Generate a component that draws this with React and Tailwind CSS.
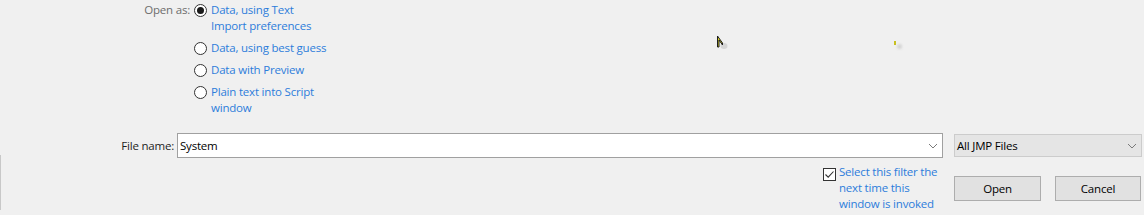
import React from "react";

const font = { fontFamily: '"Segoe UI", "Open Sans", "Noto Sans", sans-serif' };

const Radio = ({ checked }) => (
  <span className="mt-[2px] flex h-[13px] w-[13px] shrink-0 items-center justify-center rounded-full border border-[#333333] bg-white">
    {checked && <span className="h-[7px] w-[7px] rounded-full bg-[#1a1a1a]" />}
  </span>
);

const Chevron = () => (
  <svg width="10" height="6" viewBox="0 0 10 6" className="shrink-0">
    <path d="M1 1 L5 5 L9 1" fill="none" stroke="#7a7a7a" strokeWidth="1" />
  </svg>
);

const options = [
  { lines: ["Data, using Text", "Import preferences"], checked: true },
  { lines: ["Data, using best guess"] },
  { lines: ["Data with Preview"] },
  { lines: ["Plain text into Script", "window"] },
];

export default function App() {
  return (
    <div
      className="relative h-[215px] w-[1144px] overflow-hidden bg-[#f0f0f0] text-[11.5px] leading-4 tracking-[-0.2px]"
      style={font}
    >
      {/* Open as options */}
      <div className="flex pt-[2px]">
        <div className="w-[191px] pr-[1px] text-right text-[#6d6d6d]">Open as:</div>
        <div className="ml-[3px] flex flex-col gap-[6px]">
          {options.map((o, i) => (
            <div key={i} className="flex items-start gap-[4px]">
              <Radio checked={o.checked} />
              <div className="whitespace-nowrap text-[#2d7ddb]">
                {o.lines.map((l, j) => (
                  <div key={j}>{l}</div>
                ))}
              </div>
            </div>
          ))}
        </div>
      </div>

      {/* File name row */}
      <div className="mt-[17px] flex items-center pr-[2px]">
        <div className="w-[174px] text-right text-[#1e1e1e]">File name:</div>
        <div className="ml-[3px] flex h-[25px] flex-1 items-center justify-between border border-[#a0a0a0] bg-white pl-[2px] pr-[4px] text-[#000]">
          <span>System</span>
          <Chevron />
        </div>
        <div className="ml-[11px] flex h-[23px] w-[188px] items-center justify-between border border-[#cccccc] bg-[#e5e5e5] pl-[2px] pr-[4px] text-[#000]">
          <span>All JMP Files</span>
          <Chevron />
        </div>
      </div>

      {/* Filter checkbox + buttons */}
      <div className="-mt-[3px] flex h-[55px] border-l border-[#c8c8c8] pr-[2px]">
        <div className="flex flex-1 justify-end pt-[9px]">
          <div className="flex items-start gap-[3px]">
            <span className="mt-[4px] flex h-[13px] w-[13px] shrink-0 items-center justify-center border border-[#333333] bg-white">
              <svg width="11" height="11" viewBox="0 0 11 11">
                <path d="M1.5 5.5 L4.2 8.2 L9.5 2.5" fill="none" stroke="#333333" strokeWidth="1.1" />
              </svg>
            </span>
            <div className="w-[104px] whitespace-nowrap text-[#2d7ddb]">
              <div>Select this filter the</div>
              <div>next time this</div>
              <div>window is invoked</div>
            </div>
          </div>
        </div>
        <div className="ml-[11px] flex w-[188px] items-start gap-[14px] pt-[21px]">
          <button className="h-[25px] w-[87px] border border-[#adadad] bg-[#e1e1e1] text-[#000]">Open</button>
          <button className="h-[25px] w-[86px] border border-[#adadad] bg-[#e1e1e1] text-[#000]">Cancel</button>
        </div>
      </div>

      {/* stray cursor marks */}
      <svg className="absolute left-[716px] top-[35px]" width="12" height="16" viewBox="0 0 12 16">
        <ellipse cx="8" cy="11" rx="3.5" ry="3" fill="#cfcfcf" opacity="0.8" />
        <path d="M1.5 1 L1.5 12 L3 12 L3 5 L6.5 10 L6.5 8 Z" fill="#d8d020" stroke="#1e1e1e" strokeWidth="1" />
      </svg>
      <div className="absolute left-[894px] top-[41px] h-[4px] w-[2px] bg-[#c8c020]" />
      <div className="absolute left-[897px] top-[44px] h-[5px] w-[5px] rounded-full bg-[#d4d4d4] blur-[1px]" />
    </div>
  );
}
